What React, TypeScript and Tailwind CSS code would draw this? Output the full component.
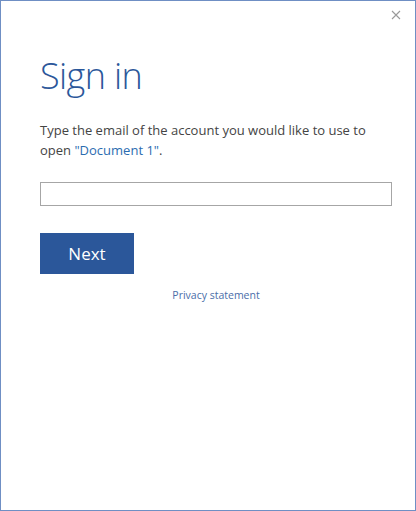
import React from "react";

export default function App() {
  return (
    <div
      className="relative w-[416px] h-[511px] bg-white border border-[#6f8fc4] overflow-hidden"
      style={{ fontFamily: '"Open Sans", "Noto Sans", sans-serif' }}
    >
      <button className="absolute right-[14px] top-[9px] w-[10px] h-[10px] flex items-center justify-center">
        <svg width="10" height="10" viewBox="0 0 10 10">
          <path d="M1 1 L9 9 M9 1 L1 9" stroke="#9a9a9a" strokeWidth="1.1" fill="none" />
        </svg>
      </button>
      <div className="flex flex-col pl-[39px] pr-[24px] pt-[51px]">
        <h1 className="text-[36px] leading-[48px] font-light text-[#2b579a] tracking-[-0.6px]">Sign in</h1>
        <p className="mt-[20px] w-[330px] text-[13px] leading-[20px] text-[#444444]">
          Type the email of the account you would like to use to open{" "}
          <span className="text-[#2b6cb0]">"Document 1"</span>.
        </p>
        <input
          type="text"
          className="mt-[22px] w-[352px] h-[24px] border border-[#a6a6a6] outline-none"
        />
        <button className="mt-[27px] w-[94px] h-[41px] bg-[#2b579a] text-white text-[17px] flex items-center justify-center">
          Next
        </button>
        <div className="mt-[14px] w-[352px] flex justify-center">
          <span className="text-[10.5px] leading-[15px] text-[#4a6ea9]">Privacy statement</span>
        </div>
      </div>
    </div>
  );
}
